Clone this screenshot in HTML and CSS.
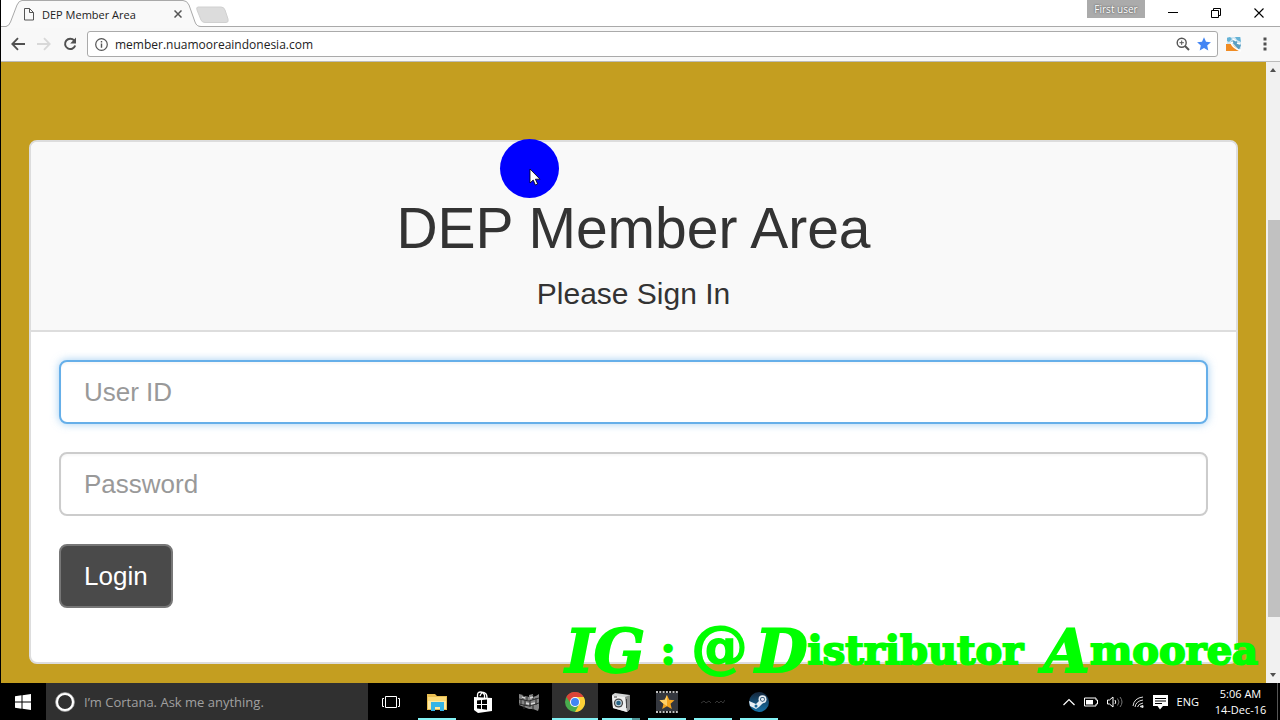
FILE: index.html
```html
<!DOCTYPE html>
<html lang="en">
<head>
<meta charset="utf-8">
<title>DEP Member Area</title>
<link rel="stylesheet" href="styles.css">
</head>
<body>
<div class="browser">
  <header class="tabstrip">
    <div class="tab">
      <svg class="tab-shape" width="200" height="28" viewBox="0 0 200 28"><path d="M0 26.500H5Q8 26 9.500 22L16 5Q18 .5 21 .5H182Q186 .5 188 5L194 22Q195.500 26.500 200 26.500V28H0Z" fill="#f9f9f9"/><path d="M0 26.500H5Q8 26 9.500 22L16 5Q18 .5 21 .5H182Q186 .5 188 5L194 22Q195.500 26.500 200 26.500" fill="none" stroke="#a9a9a9"/></svg>
      <svg class="tab-file" width="10" height="14" viewBox="0 0 10 14" fill="none" stroke="#555"><path d="M.5 1.500h5l4 4v7.500h-9zM5.500 1.500v4h4"/></svg>
      <span class="tab-title">DEP Member Area</span>
      <button class="tab-close" aria-label="Close tab"><svg width="8" height="8" viewBox="0 0 8 8" stroke="#555" stroke-width="1.500"><path d="M.5.5l7 7M7.500.5l-7 7"/></svg></button>
    </div>
    <button class="tab-new" aria-label="New tab"><svg width="34" height="18" viewBox="0 0 34 18"><path d="M2 1H25Q28 1 29 4L32 13Q33 16.500 30 16.500H9Q6 16.500 5 14L1 4Q0 1 2 1Z" fill="#dcdcdc" stroke="#d0d0d0"/></svg></button>
    <span class="spacer"></span>
    <button class="profile">First user</button>
    <div class="window-buttons">
      <button aria-label="Minimize"><svg width="10" height="10" viewBox="0 0 10 10" stroke="#000"><path d="M0 4.500h10"/></svg></button>
      <button aria-label="Restore"><svg width="10" height="10" viewBox="0 0 10 10" fill="none" stroke="#000"><path d="M.5 2.500h7v7h-7zM2.500 2.500v-2h7v7h-2"/></svg></button>
      <button aria-label="Close"><svg width="10" height="10" viewBox="0 0 10 10" stroke="#000" stroke-width="1.100"><path d="M.5.5l9 9M9.500.5l-9 9"/></svg></button>
    </div>
  </header>
  <nav class="toolbar">
    <button class="nav-button" aria-label="Back"><svg width="14" height="14" viewBox="0 0 14 14" fill="none" stroke="#505050" stroke-width="1.800"><path d="M14 7H1.500M7 1.200L1.300 7 7 12.800"/></svg></button>
    <button class="nav-button" aria-label="Forward"><svg width="14" height="14" viewBox="0 0 14 14" fill="none" stroke="#d8d8d8" stroke-width="1.800"><path d="M0 7h12.500M7 1.200L12.700 7 7 12.800"/></svg></button>
    <button class="nav-button" aria-label="Reload"><svg width="14" height="14" viewBox="0 0 14 14"><path d="M11.200 3.500A5.200 5.200 0 1 0 12.200 8.500" fill="none" stroke="#505050" stroke-width="2"/><path d="M13 .6V6.400H7.200Z" fill="#505050"/></svg></button>
    <div class="address">
      <svg width="13" height="13" viewBox="0 0 13 13" fill="none" stroke="#555"><circle cx="6.500" cy="6.500" r="5.800" stroke-width="1.200"/><path d="M6.500 5.500v4.200M6.500 3v1.400" stroke-width="1.400"/></svg>
      <input class="url" aria-label="Address" value="member.nuamooreaindonesia.com">
      <button aria-label="Zoom"><svg width="14" height="14" viewBox="0 0 14 14" fill="none" stroke="#555"><circle cx="5.700" cy="5.700" r="4.500" stroke-width="1.400"/><path d="M3.500 5.700h4.400M5.700 3.500v4.400"/><path d="M9 9l4 4" stroke-width="2"/></svg></button>
      <button aria-label="Bookmark"><svg width="14" height="14" viewBox="0 0 14 14"><path d="M7 .3l2 4.500 4.900.5-3.700 3.200 1.100 4.900L7 10.900l-4.300 2.500 1.100-4.900L.1 5.300 5 4.800z" fill="#4285f4"/></svg></button>
    </div>
    <button class="extension" aria-label="Extension"><svg width="16" height="16" viewBox="0 0 16 16"><rect x="1" y="1" width="14" height="12" fill="#cfe6f2"/><path d="M1 2l3-1 2 2-3 3-2-1zM9 1h5l1 5-4-2z" fill="#65b2d5"/><path d="M5 5l4-1 6 5-2 5z" fill="#5b9ec1"/><path d="M7 3l3 2M5 7l2-1M11 7l3 1" stroke="#fff" stroke-width="1.500"/><path d="M0 8h5q3 1 8 7H0z" fill="#f08c24"/><path d="M5 7q2 5 10 8" fill="none" stroke="#fff" stroke-width="1.500"/></svg></button>
    <button class="menu" aria-label="Menu"><svg width="4" height="14" viewBox="0 0 4 14" fill="#505050"><path d="M.5.500h3v3h-3zM.5 5.500h3v3h-3zM.5 10.500h3v3h-3z"/></svg></button>
  </nav>
  <div class="viewport">
    <main class="page">
      <section class="panel">
        <div class="panel-heading">
          <h1>DEP Member Area</h1>
          <h2>Please Sign In</h2>
        </div>
        <form class="panel-body">
          <input class="field field-active" type="text" placeholder="User ID" aria-label="User ID">
          <input class="field" type="password" placeholder="Password" aria-label="Password">
          <button class="login" type="button">Login</button>
        </form>
      </section>
    </main>
    <div class="scrollbar">
      <svg width="6" height="4" viewBox="0 0 6 4" fill="#505050"><path d="M0 4l3-4 3 4z"/></svg>
      <div class="track"><div class="thumb"></div></div>
      <svg width="6" height="4" viewBox="0 0 6 4" fill="#505050"><path d="M0 0l3 4 3-4z"/></svg>
    </div>
  </div>
</div>
<footer class="taskbar">
  <button class="start" aria-label="Start"><svg width="16" height="16" viewBox="0 0 16 16" fill="#fff"><path d="M0 2.200L6.500 1.300V7.500H0zM7.500 1.200L16 0v7.500H7.500zM0 8.500h6.500v6.200L0 13.800zM7.500 8.500H16V16l-8.500-1.200z"/></svg></button>
  <label class="cortana"><svg width="20" height="20" viewBox="0 0 20 20" fill="none" stroke="#fff"><circle cx="10" cy="10" r="8.200" stroke-width="2.600"/><circle cx="10" cy="10" r="9.500" stroke="#999" stroke-width=".7"/></svg>
    <input aria-label="Search" placeholder="I’m Cortana. Ask me anything."></label>
  <button class="app" aria-label="Task view"><svg width="20" height="14" viewBox="0 0 20 14" fill="none" stroke="#fff"><path d="M4.500 1.500h11v11h-11zM3 3.500H1.500v8H3M17 3.500h1.500v8H17"/></svg></button>
  <button class="app open" aria-label="File Explorer"><svg width="20" height="18" viewBox="0 0 20 18"><path d="M0 1h8l2 2h10v14H0z" fill="#e8bd50"/><path d="M1 4h18v12H1z" fill="#ffe9a0"/><path d="M1 4h18v4H1z" fill="#fad978"/><path d="M4 9h13v9h-4v-4H8v4H4z" fill="#35b4e5"/></svg></button>
  <button class="app" aria-label="Store"><svg width="20" height="24" viewBox="0 0 20 24"><path d="M4.500 8V5q0-3 3-3t4 3v3M7 6q2-5 5-3 2 1 2 5" fill="none" stroke="#fff" stroke-width="1.300"/><path d="M1 7l18 1v13L5 23 1 20z" fill="#fff"/><path d="M4 10.500l4-.5v4H4zM9 10l5-.5V14H9zM4 15h4v4l-4-.5zM9 15h5v4.800L9 19z" fill="#000"/></svg></button>
  <button class="app" aria-label="Wall"><svg width="20" height="18" viewBox="0 0 20 18"><path d="M0 1l4 1v2l3-1 3 1V2l4-1v3l3-1 3-2v14l-1 3-5-2-4 0-5-2-5-2z" fill="#858585"/><path d="M0 6l10 2 10-3M0 11l10 2 10-3M4 2v5M8 3v4M14 2v5M2 6v6M6 7v6M11 8v6M17 5v7M5 12v4M14 12v5" fill="none" stroke="#2d2d2d"/><path d="M3 4l3 1M11 5l3-1M7 10l3 1M12 11l4-1" stroke="#d8d8d8" stroke-width="1.500"/></svg></button>
  <button class="app open active" aria-label="Chrome"><svg width="20" height="20" viewBox="0 0 20 20"><circle cx="10" cy="10" r="10" fill="#49ac4d"/><path d="M1.300 5A10 10 0 0 1 18.700 5H10L6 11.500z" fill="#dc4437"/><path d="M10 5h8.700A10 10 0 0 1 10 20L14.300 12z" fill="#fdd037"/><circle cx="10" cy="10" r="5" fill="#fff"/><circle cx="10" cy="10" r="4" fill="#4285f4"/></svg></button>
  <button class="app open stacked" aria-label="Camera"><svg width="20" height="20" viewBox="0 0 20 20"><path d="M1 3l3-2 15 2v14l-3 3-14-4z" fill="#d4d6d6"/><path d="M1 4l13 1 2 15-14-4z" fill="#efefef"/><path d="M14 5l5-2v14l-3 3z" fill="#8c8c8c"/><circle cx="7.500" cy="11" r="4.600" fill="#444"/><circle cx="7.500" cy="11" r="3.300" fill="#cad8de"/><circle cx="7.500" cy="11" r="2.300" fill="#286486"/><path d="M3 5h3M15.500 7v9" stroke="#444"/></svg></button>
  <button class="app open" aria-label="Movie editor"><svg width="22" height="22" viewBox="0 0 22 22"><path d="M0 2h22v18H0z" fill="#34373e"/><path d="M0 1h22M0 21h22" stroke="#fff" stroke-width="1.500" stroke-dasharray="2 1.300"/><path d="M11 4l2.200 4.800 5.300.4-4 3.500 1.300 5.300-4.800-2.800L6.200 18l1.300-5.300-4-3.500 5.300-.4z" fill="#f5a51e"/><path d="M11 4v11L7.500 12.700l-4-3.500 5.300-.4z" fill="#ffd168"/></svg></button>
  <button class="app open" aria-label="Recorder"><svg width="24" height="6" viewBox="0 0 24 6" fill="none" stroke="#353535"><path d="M0 4l3-2 2 2 3-2 2 2M14 4l2-2 2 2 2-2 2 2 2-3"/></svg></button>
  <button class="app open" aria-label="Steam"><svg width="20" height="20" viewBox="0 0 20 20"><defs><linearGradient id="steam" x2="0" y2="1"><stop stop-color="#15263b"/><stop offset="1" stop-color="#1672a8"/></linearGradient></defs><circle cx="10" cy="10" r="10" fill="url(#steam)"/><path d="M0 9l7 3 4-4 5 1-6 6-3 2-6-3z" fill="#e8eef3"/><circle cx="13.500" cy="7.300" r="4" fill="#e8eef3"/><circle cx="13.500" cy="7.300" r="2.400" fill="#19466a"/><circle cx="13.500" cy="7.300" r="1.600" fill="#e8eef3"/><circle cx="7" cy="14" r="1.500" fill="#19689a"/></svg></button>
  <span class="spacer"></span>
  <div class="tray">
    <svg width="12" height="8" viewBox="0 0 12 8" fill="none" stroke="#fff" stroke-width="1.200"><path d="M.5 7L6 1.500 11.500 7"/></svg>
    <svg width="14" height="10" viewBox="0 0 14 10"><path d="M.5 1h11.500v2h1.500v4H12v2H.5z" fill="none" stroke="#fff"/><path d="M2 3h7v4.500H2z" fill="#fff"/></svg>
    <svg width="16" height="12" viewBox="0 0 16 12" fill="none" stroke="#fff"><path d="M.5 4h2L6 1v10L2.500 8h-2z"/><path d="M8 4q1.500 2 0 4"/><path d="M10.500 2.500q3 3.500 0 7M13 1q4 5 0 10" stroke="#777"/></svg>
    <svg width="12" height="12" viewBox="0 0 12 12" fill="none" stroke="#ddd"><path d="M1 10Q2 2 11 1M3 11Q4 5 11 4M5.500 11Q6 8 11 7"/><path d="M8 10.500l3-1v2z" fill="#fff"/></svg>
    <svg width="15" height="16" viewBox="0 0 15 16"><path d="M0 1h15v11H10l-3 3.500L4.500 12H0z" fill="#fff"/><path d="M2 4.500h11M2 7h11M2 9.500h7" stroke="#000"/></svg>
    <span class="language">ENG</span>
  </div>
  <div class="clock"><time>5:06 AM</time><span>14-Dec-16</span></div>
</footer>
<div class="pointer"><svg width="12" height="19" viewBox="0 0 12 19"><path d="M1 1v14l3.200-3 2.200 5 2.200-1-2.200-4.800H11z" fill="#fff" stroke="#000" stroke-width=".8"/></svg></div>
<p class="watermark"><span class="script">IG</span> <span class="colon">:</span> <span class="at">@</span><span class="script">D</span>istributor<span class="script capital-a">A</span>moorea</p>
</body>
</html>
```
FILE: styles.css
```css
* { box-sizing: border-box; }
body {
  margin: 0;
  height: 100vh;
  display: flex;
  flex-direction: column;
  overflow: hidden;
  font-family: "Open Sans", "Noto Sans", sans-serif;
  font-size: 12px;
  color: #333;
  background: #000;
}
button, input { font: inherit; margin: 0; padding: 0; border: 0; background: none; color: inherit; outline: 0; min-width: 0; }
button { display: flex; align-items: center; justify-content: center; }
svg { display: block; flex: none; }
.spacer { flex: 1; }
.browser { flex: 1; min-height: 0; display: flex; flex-direction: column; border-left: 1px solid #000; background: #fff; }
.tabstrip { display: flex; height: 27px; border-bottom: 1px solid #a9a9a9; }
.tab { position: relative; display: flex; align-items: center; width: 195px; height: 28px; padding: 0 14px 0 23px; margin-bottom: -1px; }
.tab-shape { position: absolute; left: 0; top: 0; }
.tab-file, .tab-title, .tab-close { position: relative; }
.tab-title { flex: 1; margin-left: 8px; font-size: 11px; color: #222; white-space: nowrap; }
.tab-new { height: 30px; }
.profile { width: 58px; height: 18px; background: #ababab; color: #fff; font-size: 10px; text-shadow: 0 0 2px #333; white-space: nowrap; }
.window-buttons { display: flex; margin-left: 6px; }
.window-buttons button { width: 43px; height: 26px; }
.toolbar { display: flex; align-items: center; height: 35px; padding: 0 13px 0 10px; background: #f8f8f8; border-bottom: 1px solid #bbb; }
.nav-button { width: 14px; margin-right: 12px; }
.nav-button:nth-child(3) { margin-right: 10px; }
.address { flex: 1; display: flex; align-items: center; gap: 7px; height: 26px; padding: 0 6px 0 7px; border: 1px solid #aaa; border-radius: 3px; background: #fff; }
.url { flex: 1; font-size: 12px; color: #222; }
.extension { margin-left: 8px; }
.menu { margin-left: 21px; }
.viewport { flex: 1; min-height: 0; display: flex; }
.page { flex: 1; padding: 78px 28px 0; background: #c49e20; font-family: "Liberation Sans", Arial, sans-serif; }
.panel { background: #fff; border: 2px solid #ddd; border-radius: 8px; }
.panel-heading { padding: 56px 30px 20px; background: #f9f9f9; border-bottom: 2px solid #ddd; border-radius: 6px 6px 0 0; text-align: center; }
h1, h2 { margin: 0; font-weight: 400; }
h1 { font-size: 57px; line-height: 60px; }
h2 { margin-top: 20px; font-size: 30px; line-height: 32px; }
.panel-body { display: flex; flex-direction: column; align-items: flex-start; gap: 28px; padding: 28px 28px 54px; }
.field { width: 100%; height: 64px; padding: 0 23px; border: 2px solid #ccc; border-radius: 8px; background: #fff; font-size: 26px; box-shadow: inset 0 2px 2px #00000008; }
.field::placeholder { color: #999; opacity: 1; }
.field-active { border-color: #66afe9; box-shadow: inset 0 2px 2px #00000008, 0 0 8px #66afe999; }
.login { height: 64px; padding: 0 23px; border: 2px solid #777; border-radius: 8px; background: #4a4a4a; color: #fff; font-size: 26px; }
.scrollbar { width: 14px; display: flex; flex-direction: column; align-items: center; gap: 6px; padding: 6px 0; background: #f1f1f1; }
.track { flex: 1; align-self: stretch; display: flex; flex-direction: column; padding: 142px 0 50px 2px; }
.thumb { flex: 1; background: #c1c1c1; }
.taskbar { height: 37px; display: flex; align-items: stretch; background: #000; color: #fff; }
.start { width: 46px; }
.cortana { flex: 0 1 322px; display: flex; align-items: center; gap: 9px; padding: 0 9px; background: #303030; }
.cortana input { flex: 1; font-size: 13px; }
.cortana input::placeholder { color: #a0a0a0; opacity: 1; }
.app { position: relative; width: 46px; }
.open::after { content: ""; position: absolute; left: 4px; right: 4px; bottom: 0; height: 2px; background: #83f2f5; }
.active { background: #303030; }
.active::after { left: 0; right: 0; }
.stacked::after { background: linear-gradient(90deg, #83f2f5 78%, #4f9799 78%); }
.tray { display: flex; align-items: center; gap: 9px; }
.language { font-size: 11px; }
.clock { display: flex; flex-direction: column; justify-content: center; align-items: center; width: 74px; margin: 0 2px 0 5px; border-right: 1px solid #555; font-size: 11px; line-height: 16px; white-space: nowrap; }
.pointer { position: absolute; left: 500px; top: 139px; width: 59px; height: 59px; padding: 29px 0 0 29px; border-radius: 50%; background: #00f; }
.watermark { position: absolute; right: 22px; top: 622px; margin: 0; color: #0f0; font: 700 40px/56px "DejaVu Serif", serif; white-space: nowrap; -webkit-text-stroke: 2px #0f0; }
.script { font-size: 60px; font-style: italic; line-height: 1px; vertical-align: -8px; }
.colon { margin: 0 2px; }
.at { margin-right: 8px; font-size: 56px; line-height: 1px; vertical-align: -2px; }
.capital-a { margin-left: 20px; }
```
